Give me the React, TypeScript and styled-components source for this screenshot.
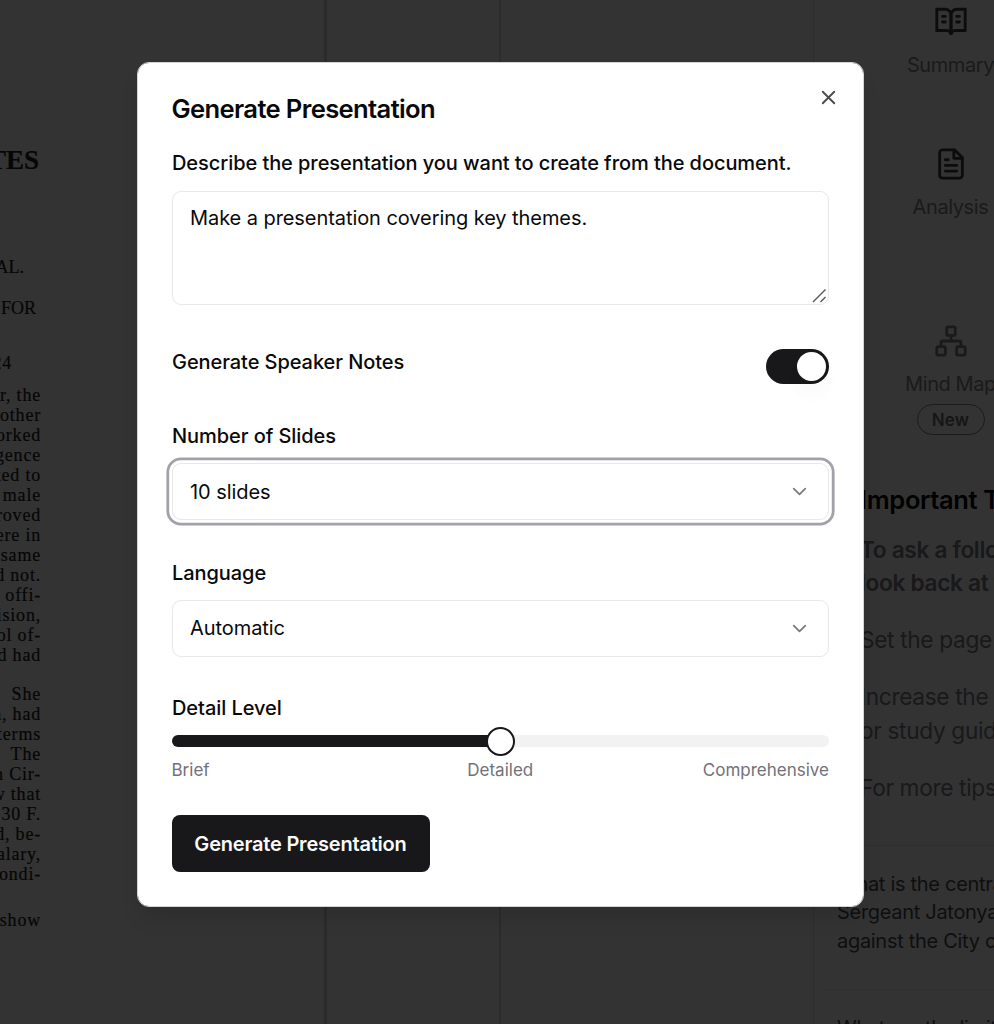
import React from 'react';
import styled, { createGlobalStyle, css } from 'styled-components';
import { ChevronDown, Network, X } from 'lucide-react';

const GlobalStyle = createGlobalStyle`
  *, *::before, *::after { box-sizing: border-box; }
  html, body { margin: 0; height: 100%; overflow: hidden; background: #333; }
  body { font-family: Inter, "Liberation Sans", sans-serif; color: #09090b; }
  h2, h3, p, ul { margin: 0; padding: 0; font-weight: inherit; }
`;

const Screen = styled.div`
  position: relative;
  width: 994px;
  height: 1024px;
  overflow: hidden;
`;

const Workspace = styled.div`
  display: grid;
  grid-template-columns: 327px 174px 312px 280px;
  width: 994px;
  height: 1024px;
  overflow: hidden;
  background: #fff;
`;

const DocumentPane = styled.section`
  border-right: 3px solid #d8d8da;
  padding-top: 145px;
  overflow: hidden;
`;

const Gutter = styled.div`
  border-right: 2px solid #dcdcde;
`;

const PageColumn = styled.div`
  display: flex;
  flex-direction: column;
  align-items: flex-end;
  width: 41px;
  font-family: "Liberation Serif", serif;
  color: #222;
  -webkit-text-stroke: 0.2px #222;
`;

const DocLine = styled.div<{ $top?: number; $size?: number; $bold?: boolean; $end?: number; $track?: number }>`
  height: 20px;
  margin-top: ${(p) => p.$top ?? 0}px;
  margin-right: ${(p) => p.$end ?? 0}px;
  font-size: ${(p) => p.$size ?? 18}px;
  font-weight: ${(p) => (p.$bold ? 700 : 400)};
  letter-spacing: ${(p) => p.$track ?? 0.8}px;
  line-height: 20px;
  white-space: pre;
`;

const Sidebar = styled.aside`
  display: flex;
  flex-direction: column;
  width: 274px;
  border-left: 1px solid #e0e0e2;
  overflow: hidden;
`;

const Tool = styled.div<{ $height: number; $muted?: boolean }>`
  display: flex;
  flex-direction: column;
  align-items: center;
  flex: none;
  width: 273px;
  height: ${(p) => p.$height}px;
  padding-top: 5px;
  color: ${(p) => (p.$muted ? '#808089' : '#3c3c42')};

  svg { width: 34px; height: 34px; flex: none; }
`;

const ToolLabel = styled.span`
  margin-top: 12px;
  font-size: 20px;
  line-height: 28px;
  letter-spacing: -0.4px;
  color: #84848c;
`;

const Badge = styled.span`
  display: flex;
  align-items: center;
  justify-content: center;
  width: 68px;
  height: 31px;
  margin-top: 6px;
  border: 1.4px solid #85858c;
  border-radius: 16px;
  font-size: 17px;
  font-weight: 600;
  letter-spacing: 0.1px;
  color: #707079;
`;

const Tips = styled.section`
  flex: none;
  height: 362px;
  padding-left: 46px;
  border-bottom: 1px solid #e4e4e7;
  white-space: nowrap;
`;

const TipsTitle = styled.h3`
  font-size: 25.5px;
  font-weight: 600;
  line-height: 32px;
  letter-spacing: -0.35px;
  color: #000;
`;

const Tip = styled.p<{ $strong?: boolean; $top?: number }>`
  margin-top: ${(p) => p.$top ?? 23.4}px;
  font-size: 22.7px;
  line-height: 33.6px;
  letter-spacing: -0.35px;
  font-weight: ${(p) => (p.$strong ? 600 : 400)};
  color: #7c7c86;
`;

const Question = styled.div<{ $top: number }>`
  flex: none;
  height: 131px;
  margin-top: ${(p) => p.$top}px;
  padding: 24px 0 0 23px;
  font-size: 20px;
  line-height: 28.4px;
  letter-spacing: -0.3px;
  white-space: nowrap;
  color: #4c4c52;
`;

const NextQuestion = styled(Question)`
  border-top: 1px solid #e8e8ea;
  border-radius: 12px 0 0;
`;

const Overlay = styled.div`
  position: absolute;
  inset: 0;
  background: rgba(0, 0, 0, 0.8);
`;

const Dialog = styled.div`
  position: absolute;
  left: 137px;
  top: 62px;
  display: flex;
  flex-direction: column;
  width: 727px;
  height: 845px;
  padding: 29px 34px 34px 33.5px;
  border: 1px solid #d4d4d6;
  border-radius: 12px;
  background: #fff;
  background-clip: padding-box;
  box-shadow: 0 14px 21px -4px rgba(0, 0, 0, 0.12);
`;

const DialogHeader = styled.header`
  display: flex;
  align-items: flex-start;
  justify-content: space-between;
  height: 57px;
`;

const Title = styled.h2`
  font-size: 25.6px;
  font-weight: 600;
  line-height: 34px;
  letter-spacing: -0.64px;
`;

const CloseButton = styled.button`
  display: flex;
  margin: -6px -11px 0 0;
  padding: 0;
  border: 0;
  background: none;
  color: #49494c;
`;

const Label = styled.label`
  display: block;
  padding-left: 0.5px;
  font-size: 20px;
  font-weight: 500;
  line-height: 28px;
  letter-spacing: -0.065px;
`;

const fieldBox = css`
  border: 1.4px solid #e8e8eb;
  border-radius: 9px;
  background: #fff;
  font-size: 20px;
  letter-spacing: -0.07px;
`;

const Prompt = styled.div`
  ${fieldBox}
  display: flex;
  justify-content: space-between;
  height: 114px;
  margin-top: 14px;
  padding: 11px 0 0 17.5px;
  line-height: 30px;

  svg { align-self: flex-end; }
`;

const SwitchRow = styled.div`
  display: flex;
  align-items: flex-start;
  justify-content: space-between;
  height: 74px;
  margin-top: 43px;
`;

const Switch = styled.button`
  display: flex;
  align-items: center;
  justify-content: flex-end;
  width: 63px;
  height: 35px;
  margin-top: 1px;
  padding: 0 3px;
  border: 0;
  border-radius: 18px;
  background: #18181b;
`;

const SwitchThumb = styled.span`
  width: 29px;
  height: 29px;
  border-radius: 50%;
  background: #fff;
  box-shadow: 0 14px 21px -4px rgba(0, 0, 0, 0.06);
`;

const Select = styled.button<{ $focused?: boolean }>`
  ${fieldBox}
  display: flex;
  align-items: center;
  justify-content: space-between;
  height: 57px;
  flex: none;
  margin-top: 13px;
  padding: 0 17px 0 17.5px;
  font-family: inherit;
  color: inherit;
  ${(p) => p.$focused && css`box-shadow: 0 0 0 2.8px #fff, 0 0 0 5.6px #a1a1aa;`}

  svg { color: #79797d; }
`;

const Gap = styled.div<{ $size: number }>`
  flex: none;
  height: ${(p) => p.$size}px;
`;

const Slider = styled.div`
  display: flex;
  align-items: center;
  height: 28px;
  margin-top: 5px;
  border-radius: 6px;
`;

const Track = styled.div<{ $filled?: boolean }>`
  flex: 1;
  height: 12px;
  border-radius: ${(p) => (p.$filled ? '6px 0 0 6px' : '0 6px 6px 0')};
  background: ${(p) => (p.$filled ? '#18181b' : '#f2f2f3')};
`;

const Thumb = styled.div`
  width: 29px;
  height: 29px;
  margin: 0 -3px;
  z-index: 1;
  border: 2.8px solid #18181b;
  border-radius: 50%;
  background: #fff;
`;

const Scale = styled.div`
  display: grid;
  grid-template-columns: 1fr auto 1fr;
  height: 59.5px;
  padding-top: 3px;
  font-size: 17px;
  line-height: 24px;
  color: #71717a;

  span:last-child { text-align: right; }
`;

const Submit = styled.button`
  align-self: flex-start;
  width: 258px;
  height: 57px;
  padding: 1px 0 0;
  border: 0;
  border-radius: 8px;
  background: #18181b;
  color: #fafafa;
  font-family: inherit;
  font-size: 20px;
  font-weight: 600;
  letter-spacing: -0.2px;
`;

const BookIcon = () => (
  <svg viewBox="0 0 24 24" fill="none" stroke="currentColor" strokeWidth="2" strokeLinecap="round">
    <path d="M2 3h6a4 4 0 0 1 4 4v14a3 3 0 0 0-3-3H2z" />
    <path d="M22 3h-6a4 4 0 0 0-4 4v14a3 3 0 0 1 3-3h7z" />
    <path d="M6 8h2M6 12h2M16 8h2M16 12h2" />
  </svg>
);

const PageIcon = () => (
  <svg viewBox="0 0 24 24" fill="none" stroke="currentColor" strokeWidth="2" strokeLinecap="round" strokeLinejoin="round">
    <path d="M14.5 2H6a2 2 0 0 0-2 2v16a2 2 0 0 0 2 2h12a2 2 0 0 0 2-2V7.5L14.5 2z" />
    <path d="M14 2v6h6M16 13H8M16 17H8M10 9H8" />
  </svg>
);

const paragraphLines = [
  'sergeant officer, the', 'among other', 'worked', 'Intelligence', 'asked to', 'with a male', 'approved',
  'were in', 'the same', 'did not.', 'ranking offi-', 'division,', 'patrol of-', 'and had',
];
const secondParagraph = [
  'VII.   She', 'action, had', 'terms', 'Act.   The', 'Eighth Cir-', 'show that', '30 F.', 'held, be-', 'salary,', 'condi-',
];

export default function App() {
  return (
    <Screen>
      <GlobalStyle />
      <Workspace>
        <DocumentPane>
          <PageColumn>
            <DocLine $top={5} $size={27} $bold $end={2} $track={0}>UNITED STATES</DocLine>
            <DocLine $top={87} $end={17} $track={0}>ET AL.</DocLine>
            <DocLine $top={21} $end={5} $track={0}>APPEALS FOR</DocLine>
            <DocLine $top={35} $end={29}>2024</DocLine>
            {paragraphLines.map((line, i) => (
              <DocLine key={line} $top={i === 0 ? 12 : 0}>{line}</DocLine>
            ))}
            {secondParagraph.map((line, i) => (
              <DocLine key={line} $top={i === 0 ? 19.4 : 0}>{line}</DocLine>
            ))}
            <DocLine $top={25.6}>must show</DocLine>
          </PageColumn>
        </DocumentPane>
        <Gutter />
        <div />
        <Sidebar>
          <Tool $height={142}>
            <BookIcon />
            <ToolLabel>Summary</ToolLabel>
          </Tool>
          <Tool $height={177}>
            <PageIcon />
            <ToolLabel>Analysis</ToolLabel>
          </Tool>
          <Tool $height={165} $muted>
            <Network />
            <ToolLabel>Mind Map</ToolLabel>
            <Badge>New</Badge>
          </Tool>
          <Tips>
            <TipsTitle>Important Tips</TipsTitle>
            <Tip $strong $top={16.5}>To ask a follow-up<br />look back at the</Tip>
            <Tip>Set the page range</Tip>
            <Tip>Increase the items<br />or study guides</Tip>
            <Tip>For more tips, see</Tip>
          </Tips>
          <Question $top={0}>What is the central<br />Sergeant Jatonya<br />against the City of</Question>
          <NextQuestion $top={12}>What are the limits</NextQuestion>
        </Sidebar>
      </Workspace>
      <Overlay />
      <Dialog role="dialog">
        <DialogHeader>
          <Title>Generate Presentation</Title>
          <CloseButton aria-label="Close"><X size={23} strokeWidth={1.9} /></CloseButton>
        </DialogHeader>
        <Label>Describe the presentation you want to create from the document.</Label>
        <Prompt>
          Make a presentation covering key themes.
          <svg width="16" height="16" viewBox="0 0 16 16" stroke="#55555a" strokeWidth="1.4" fill="none">
            <path d="M1 14 13.500 1.500M8.500 14 13.500 9" />
          </svg>
        </Prompt>
        <SwitchRow>
          <Label>Generate Speaker Notes</Label>
          <Switch aria-label="Generate speaker notes"><SwitchThumb /></Switch>
        </SwitchRow>
        <Label>Number of Slides</Label>
        <Select $focused>10 slides<ChevronDown size={23} strokeWidth={1.8} /></Select>
        <Gap $size={38.5} />
        <Label>Language</Label>
        <Select>Automatic<ChevronDown size={23} strokeWidth={1.8} /></Select>
        <Gap $size={37.5} />
        <Label>Detail Level</Label>
        <Slider><Track $filled /><Thumb /><Track /></Slider>
        <Scale><span>Brief</span><span>Detailed</span><span>Comprehensive</span></Scale>
        <Submit>Generate Presentation</Submit>
      </Dialog>
    </Screen>
  );
}
